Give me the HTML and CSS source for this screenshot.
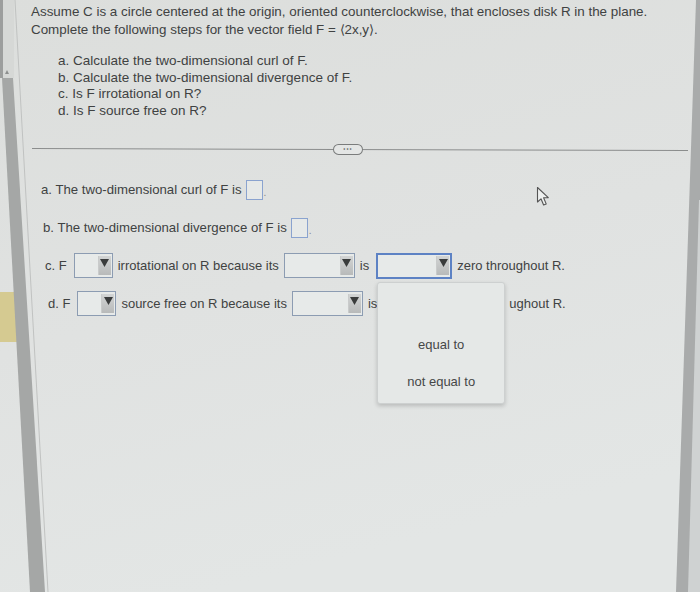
FILE: index.html
```html
<!DOCTYPE html>
<html>
<head>
<meta charset="utf-8">
<link rel="stylesheet" href="styles.css">
</head>
<body>
<div class="decor">
  <svg width="700" height="592" viewBox="0 0 700 592">
    <defs>
      <linearGradient id="bg" x1="0" y1="0" x2="0.3" y2="1">
        <stop offset="0" stop-color="#dcdedc"/>
        <stop offset="0.55" stop-color="#e0e2e1"/>
        <stop offset="1" stop-color="#e3e6e5"/>
      </linearGradient>
    </defs>
    <rect x="0" y="0" width="700" height="592" fill="url(#bg)"/>
    <polygon points="0,0 3,0 3,78 0,78" fill="#9c9e9d"/>
    <polygon points="3,0 14,0 14,78 3,78" fill="#d6d8d6"/>
    <polygon points="0,292 16,292 17,342 0,342" fill="#d5ca91"/>
    <polygon points="2,78 13,78 45,592 30,592" fill="#a5a7a6"/>
    <polygon points="5,74 7,70 9,74" fill="#8d8f8e"/>
    <line x1="15" y1="0" x2="48" y2="592" stroke="#c0c2c1" stroke-width="1"/>
    <polygon points="696,0 700,0 700,592 688,592 676,592" fill="#a9abab"/>
    <polygon points="699,200 700,200 700,592 688,592" fill="#cfd2d2"/>
  </svg>
</div>
<main class="page">
  <section class="intro">
    <p>Assume C is a circle centered at the origin, oriented counterclockwise, that encloses disk R in the plane.</p>
    <p>Complete the following steps for the vector field F = ⟨2x,y⟩.</p>
  </section>
  <ul class="steps">
    <li>a. Calculate the two-dimensional curl of F.</li>
    <li>b. Calculate the two-dimensional divergence of F.</li>
    <li>c. Is F irrotational on R?</li>
    <li>d. Is F source free on R?</li>
  </ul>
  <div class="divider"><span class="more">•••</span></div>
  <div class="answers">
    <div class="row row-a">a. The two-dimensional curl of F is <span class="box"></span><span class="dot">.</span>
      <svg class="cursor" width="14" height="21" viewBox="0 0 14 21"><path d="M1.5 1.5 L1.5 16 L5 12.8 L7.6 19 L10.2 17.9 L7.6 11.8 L12.3 11.6 Z" fill="#eef0ef" stroke="#555" stroke-width="1.1" stroke-linejoin="round"/></svg>
    </div>
    <div class="row row-b">b. The two-dimensional divergence of F is <span class="box"></span><span class="dot">.</span></div>
    <div class="row row-c">
      <span class="lbl">c. F</span>
      <span class="sel s-short"><span class="arrow"><svg width="9" height="8" viewBox="0 0 9 8"><path d="M0 0 H9 L4.5 8 Z" fill="#3a3c3c"/></svg></span></span>
      <span>irrotational on R because its</span>
      <span class="sel s-long"><span class="arrow"><svg width="9" height="8" viewBox="0 0 9 8"><path d="M0 0 H9 L4.5 8 Z" fill="#3a3c3c"/></svg></span></span>
      <span>is</span>
      <span class="sel s-eq focused"><span class="arrow"><svg width="9" height="8" viewBox="0 0 9 8"><path d="M0 0 H9 L4.5 8 Z" fill="#3a3c3c"/></svg></span>
        <span class="menu">
          <span class="opt">equal to</span>
          <span class="opt">not equal to</span>
        </span>
      </span>
      <span>zero throughout R.</span>
    </div>
    <div class="row row-d">
      <span class="lbl">d. F</span>
      <span class="sel s-short"><span class="arrow"><svg width="9" height="8" viewBox="0 0 9 8"><path d="M0 0 H9 L4.5 8 Z" fill="#3a3c3c"/></svg></span></span>
      <span>source free on R because its</span>
      <span class="sel s-long"><span class="arrow"><svg width="9" height="8" viewBox="0 0 9 8"><path d="M0 0 H9 L4.5 8 Z" fill="#3a3c3c"/></svg></span></span>
      <span>is</span>
      <span class="hidden-sel"></span>
      <span>ughout R.</span>
    </div>
  </div>
</main>
</body>
</html>
```
FILE: styles.css
```css
html, body {
  margin: 0;
  padding: 0;
}
body {
  width: 700px;
  height: 592px;
  overflow: hidden;
  position: relative;
  background: #e0e2e1;
  font-family: "Liberation Sans", Arial, sans-serif;
  color: #404242;
}
.decor {
  position: absolute;
  left: 0;
  top: 0;
  z-index: 0;
}
.decor svg { display: block; }
.page {
  position: relative;
  z-index: 1;
  padding: 3px 0 0 31px;
}
.intro p {
  margin: 0;
  font-size: 13.4px;
  line-height: 18px;
}
.steps {
  list-style: none;
  margin: 14px 0 0 27px;
  padding: 0;
  font-size: 13.5px;
  line-height: 16.7px;
}
.divider {
  margin: 24px 12px 0 1px;
  height: 11px;
  display: flex;
  align-items: center;
  justify-content: center;
  background: linear-gradient(#8b8d8d, #8b8d8d) center / 100% 1px no-repeat;
  transform: rotate(0.17deg);
}
.more {
  width: 28px;
  height: 9px;
  border: 1px solid #7a7c7c;
  border-radius: 6px;
  background: #e4e6e5;
  font-size: 6px;
  line-height: 9px;
  text-align: center;
  letter-spacing: 1px;
  color: #5a5c5c;
  margin-right: 24px;
}
.answers {
  margin-top: 22px;
  display: flex;
  flex-direction: column;
  gap: 12px;
  font-size: 13px;
}
.row {
  height: 26px;
  display: flex;
  align-items: center;
  gap: 5px;
  position: relative;
}
.row-a { padding-left: 10px; gap: 4px; font-size: 13.2px; }
.row-b { padding-left: 12px; gap: 4px; font-size: 13.2px; }
.row-c { padding-left: 14px; }
.row-d { padding-left: 17px; }
.box {
  display: inline-block;
  width: 15px;
  height: 18px;
  border: 1px solid #8aa3cf;
  background: #e6e9e8;
}
.dot { margin-left: -3px; font-size: 10px; align-self: flex-end; margin-bottom: 5px; color: #888; }
.cursor {
  position: absolute;
  left: 505px;
  top: 9px;
}
.sel {
  position: relative;
  display: inline-flex;
  justify-content: flex-end;
  align-items: center;
  height: 25px;
  border: 1px solid #8c9cb2;
  background: #e7eae9;
  box-sizing: border-box;
  padding-right: 1px;
}
.s-short { width: 39px; margin-left: 2px; }
.s-long { width: 71px; }
.s-eq { width: 76px; margin-left: 2px; }
.focused {
  border: 2px solid #5d82c4;
  height: 26px;
}
.arrow {
  width: 13px;
  height: 19px;
  background: linear-gradient(#d2d4d4, #b8baba);
  border-left: 1px solid #c9cbcb;
  display: flex;
  align-items: flex-start;
  justify-content: center;
  padding-top: 3px;
  box-sizing: border-box;
}
.arrow svg { display: block; }
.menu {
  position: absolute;
  left: -1px;
  top: 27px;
  width: 128px;
  height: 122px;
  box-sizing: border-box;
  background: #e5e8e7;
  border: 1px solid #cdd0d0;
  border-radius: 3px;
  box-shadow: 0 2px 4px rgba(0,0,0,0.18);
  z-index: 3;
  display: flex;
  flex-direction: column;
  align-items: center;
  padding-top: 54px;
  gap: 21px;
  font-size: 13px;
  color: #454747;
}
.opt { line-height: 16px; }
.hidden-sel { width: 122px; }
```
